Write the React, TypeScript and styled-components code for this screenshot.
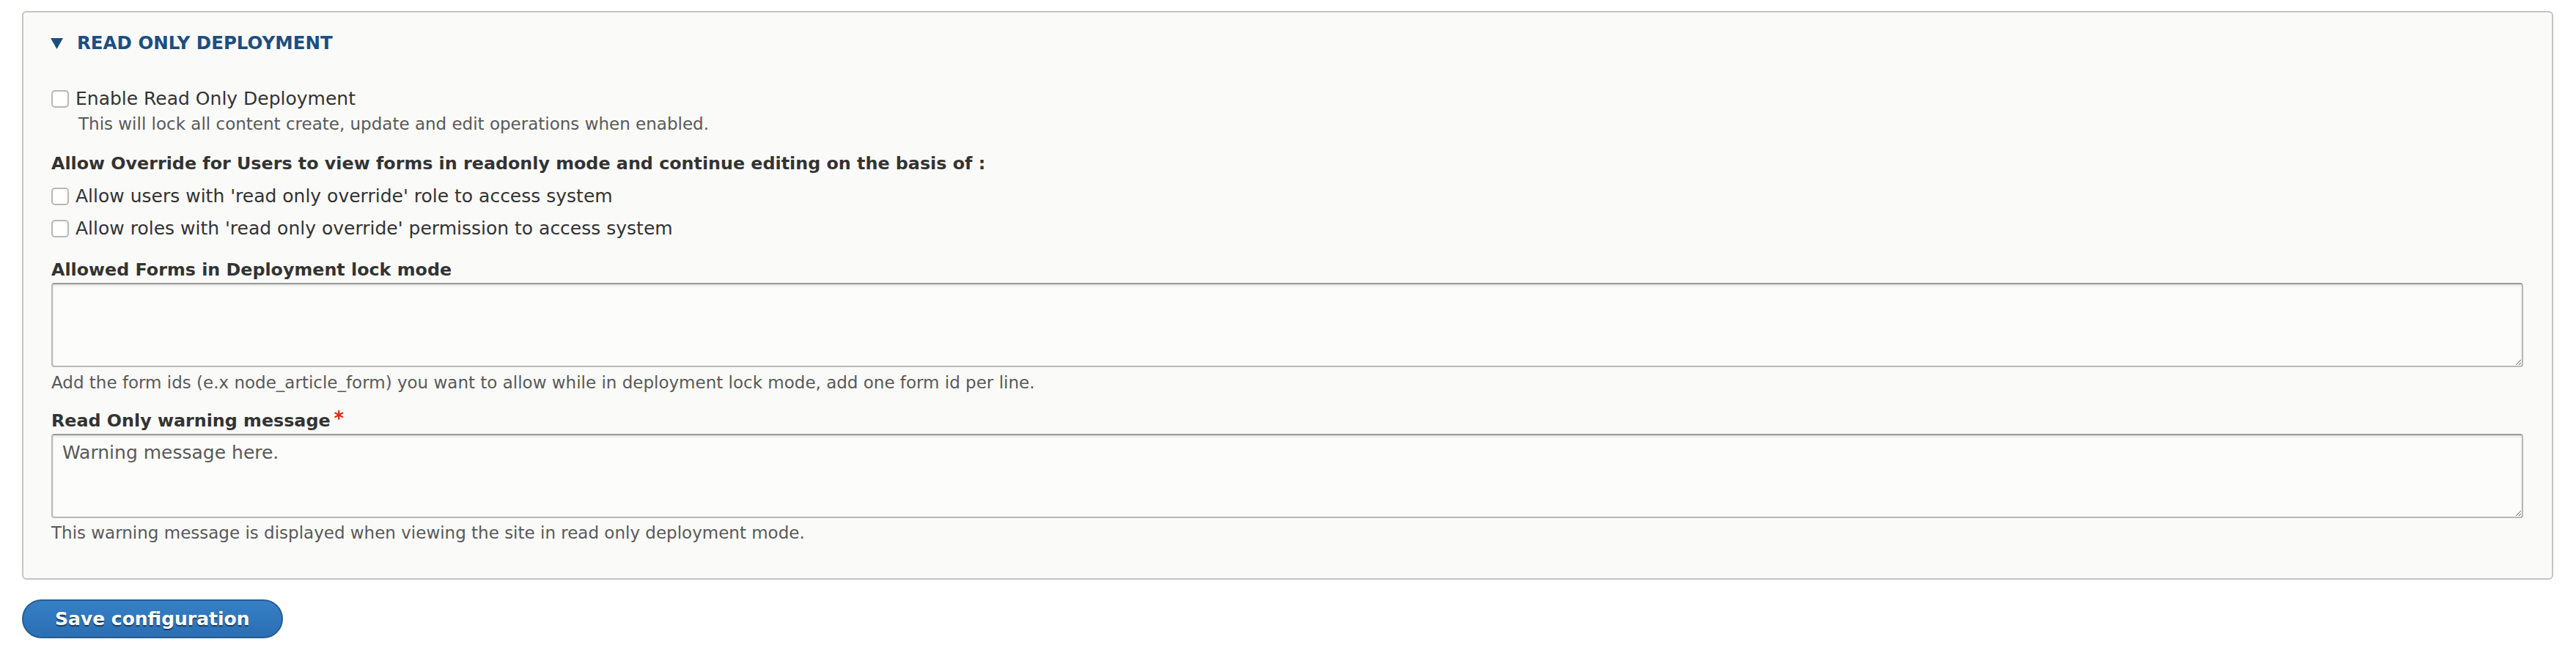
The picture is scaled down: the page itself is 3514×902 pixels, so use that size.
import styled, { createGlobalStyle } from 'styled-components';

const GlobalStyle = createGlobalStyle`
  html, body {
    margin: 0;
    padding: 0;
    background: #ffffff;
  }
  body {
    font-family: "DejaVu Sans", "Liberation Sans", sans-serif;
    color: #333333;
  }
`;

const overrideOptions = [
  "Allow users with 'read only override' role to access system",
  "Allow roles with 'read only override' permission to access system",
];

function App() {
  return (
    <PageStyle>
      <GlobalStyle />
      <DetailsStyle>
        <SummaryStyle>
          <svg width="17" height="15" viewBox="0 0 17 15">
            <polygon points="0,0 17,0 8.5,15" fill="#1d4e80" />
          </svg>
          <span>Read Only Deployment</span>
        </SummaryStyle>

        <ItemStyle $top={38}>
          <CheckRow>
            <CheckBox type="checkbox" />
            <span>Enable Read Only Deployment</span>
          </CheckRow>
          <Description $indent={37} $top={2}>
            This will lock all content create, update and edit operations when enabled.
          </Description>
        </ItemStyle>

        <ItemStyle $top={21}>
          <FieldLabel>
            Allow Override for Users to view forms in readonly mode and continue editing on the basis of :
          </FieldLabel>
          {overrideOptions.map((opt) => (
            <CheckRow key={opt} $top={8}>
              <CheckBox type="checkbox" />
              <span>{opt}</span>
            </CheckRow>
          ))}
        </ItemStyle>

        <ItemStyle $top={21}>
          <FieldLabel>Allowed Forms in Deployment lock mode</FieldLabel>
          <TextArea defaultValue="" />
          <Description $top={6}>
            Add the form ids (e.x node_article_form) you want to allow while in deployment lock mode, add one form id per line.
          </Description>
        </ItemStyle>

        <ItemStyle $top={16}>
          <FieldLabel>
            Read Only warning message<Required>*</Required>
          </FieldLabel>
          <TextArea defaultValue="Warning message here." />
          <Description $top={5}>
            This warning message is displayed when viewing the site in read only deployment mode.
          </Description>
        </ItemStyle>
      </DetailsStyle>

      <SaveButton type="button">Save configuration</SaveButton>
    </PageStyle>
  );
}

export default App;

const PageStyle = styled.div`
  padding: 15px 31px 28px 30px;
`;

const DetailsStyle = styled.div`
  border: 2px solid #c4c4c4;
  border-radius: 6px;
  background-color: #fafaf8;
  padding: 21px 39px 47px 38px;
`;

const SummaryStyle = styled.div`
  display: flex;
  align-items: center;
  gap: 19px;
  height: 40px;
  margin-left: -1px;
  color: #1d4e80;
  font-size: 24.5px;
  font-weight: bold;
  text-transform: uppercase;
  svg {
    margin-top: 2px;
  }
`;

const ItemStyle = styled.div<{ $top: number }>`
  margin-top: ${(p) => p.$top}px;
`;

const CheckRow = styled.label<{ $top?: number }>`
  display: flex;
  align-items: center;
  height: 36px;
  margin-top: ${(p) => p.$top || 0}px;
  font-size: 25px;
  color: #333333;
`;

const CheckBox = styled.input`
  appearance: none;
  flex: none;
  width: 24px;
  height: 24px;
  margin: 1px 9px 0 0;
  border: 2px solid #b8b8b8;
  border-radius: 5px;
  background: #ffffff;
  box-sizing: border-box;
`;

const Description = styled.div<{ $indent?: number; $top?: number }>`
  margin-left: ${(p) => p.$indent || 0}px;
  margin-top: ${(p) => p.$top || 0}px;
  font-size: 23px;
  line-height: 30px;
  color: #595959;
`;

const FieldLabel = styled.div`
  font-size: 23.8px;
  line-height: 36px;
  font-weight: bold;
  color: #333333;
`;

const Required = styled.span`
  color: #e32700;
  font-size: 26px;
  margin-left: 5px;
  vertical-align: 2px;
`;

const TextArea = styled.textarea`
  display: block;
  box-sizing: border-box;
  width: 100%;
  height: 115px;
  margin: 0;
  padding: 9px 13px;
  border: 2px solid #b8b8b8;
  border-top-color: #999999;
  border-radius: 4px;
  box-shadow: inset 0 2px 3px rgba(0, 0, 0, 0.1);
  background: #fcfcfa;
  font-family: "DejaVu Sans", "Liberation Sans", sans-serif;
  font-size: 25px;
  line-height: 30px;
  color: #595959;
  resize: vertical;
`;

const SaveButton = styled.button`
  display: block;
  margin-top: 27px;
  height: 53px;
  padding: 0 43px;
  border: 2px solid #2a5d92;
  border-radius: 40px;
  background: linear-gradient(to bottom, #3680c6, #2b6eb2);
  color: #ffffff;
  font-family: "DejaVu Sans", "Liberation Sans", sans-serif;
  font-size: 25px;
  font-weight: bold;
  text-shadow: 0 2px 1px rgba(0, 0, 0, 0.5);
`;
